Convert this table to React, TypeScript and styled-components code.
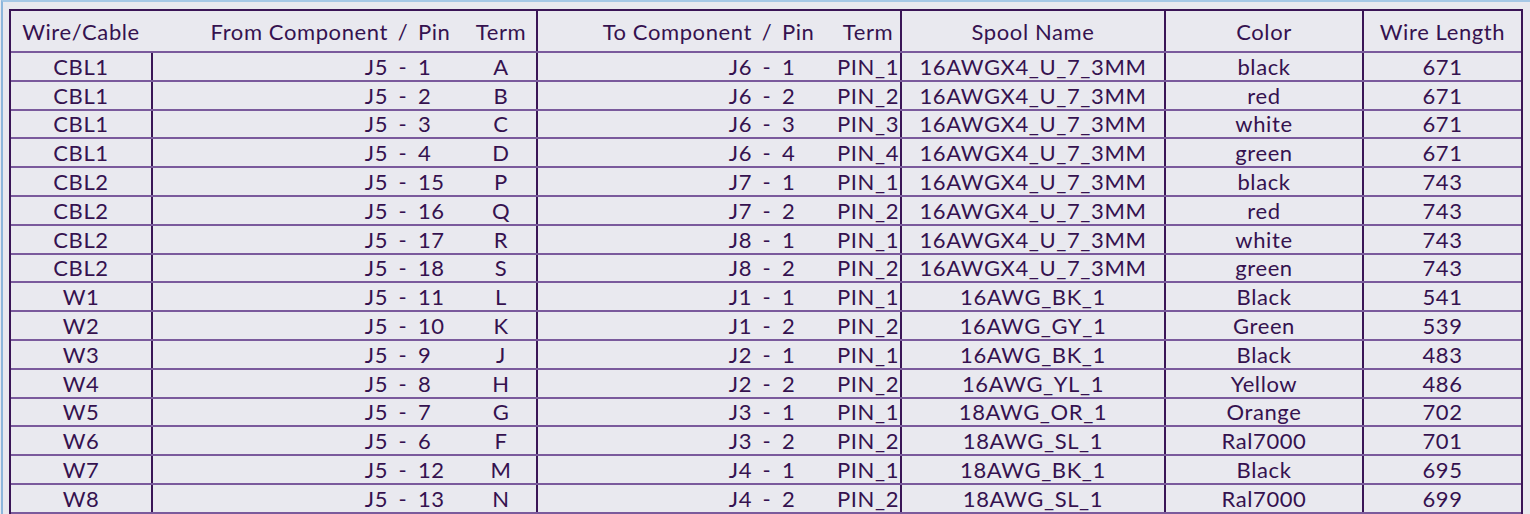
import React from 'react';
import styled, { createGlobalStyle } from 'styled-components';

const GlobalStyle = createGlobalStyle`
  html, body {
    margin: 0;
    padding: 0;
    background: #e9e9ef;
  }
`;

const COLUMNS = '140px 315px 70px 300px 64px 264px 198px 159px';

const Frame = styled.div`
  height: 514px;
  box-sizing: border-box;
  margin-left: 1px;
  padding: 7px 0 0 6px;
  border-top: 2px solid #a6c8e6;
  border-left: 2px solid #8db6dc;
  overflow: hidden;
`;

const Table = styled.div`
  width: 1514px;
  box-sizing: border-box;
  border: 2px solid #3a1556;
  border-bottom: none;
  font-family: Lato, 'Open Sans', sans-serif;
  font-size: 22px;
  letter-spacing: 0.6px;
  color: #35124f;
`;

const HeaderRow = styled.div`
  display: grid;
  grid-template-columns: ${COLUMNS};
  height: 42px;
  box-sizing: border-box;
  border-bottom: 2px solid #7a5a9c;
`;

const Row = styled.div`
  display: grid;
  grid-template-columns: ${COLUMNS};
  height: 28.8px;
  box-sizing: border-box;
  border-bottom: 2px solid #7a5a9c;
`;

const Cell = styled.div<{ $divider?: boolean }>`
  display: flex;
  align-items: center;
  justify-content: center;
  box-sizing: border-box;
  border-left: ${(p) => (p.$divider ? '2px solid #3a1556' : 'none')};
  white-space: nowrap;
  line-height: 1;
  padding-top: 1px;
`;

const PinRef = styled(Cell)<{ $gap: number }>`
  justify-content: flex-end;
  padding-right: ${(p) => p.$gap}px;
`;

const Dash = styled.span`
  width: 30px;
  text-align: center;
`;

const PinNo = styled.span`
  width: 32px;
  text-align: left;
`;

type Wire = {
  id: string;
  fromPin: string;
  fromTerm: string;
  to: string;
  toPin: string;
  toTerm: string;
  spool: string;
  color: string;
  length: number;
};

const wires: Wire[] = [
  { id: 'CBL1', fromPin: '1', fromTerm: 'A', to: 'J6', toPin: '1', toTerm: 'PIN_1', spool: '16AWGX4_U_7_3MM', color: 'black', length: 671 },
  { id: 'CBL1', fromPin: '2', fromTerm: 'B', to: 'J6', toPin: '2', toTerm: 'PIN_2', spool: '16AWGX4_U_7_3MM', color: 'red', length: 671 },
  { id: 'CBL1', fromPin: '3', fromTerm: 'C', to: 'J6', toPin: '3', toTerm: 'PIN_3', spool: '16AWGX4_U_7_3MM', color: 'white', length: 671 },
  { id: 'CBL1', fromPin: '4', fromTerm: 'D', to: 'J6', toPin: '4', toTerm: 'PIN_4', spool: '16AWGX4_U_7_3MM', color: 'green', length: 671 },
  { id: 'CBL2', fromPin: '15', fromTerm: 'P', to: 'J7', toPin: '1', toTerm: 'PIN_1', spool: '16AWGX4_U_7_3MM', color: 'black', length: 743 },
  { id: 'CBL2', fromPin: '16', fromTerm: 'Q', to: 'J7', toPin: '2', toTerm: 'PIN_2', spool: '16AWGX4_U_7_3MM', color: 'red', length: 743 },
  { id: 'CBL2', fromPin: '17', fromTerm: 'R', to: 'J8', toPin: '1', toTerm: 'PIN_1', spool: '16AWGX4_U_7_3MM', color: 'white', length: 743 },
  { id: 'CBL2', fromPin: '18', fromTerm: 'S', to: 'J8', toPin: '2', toTerm: 'PIN_2', spool: '16AWGX4_U_7_3MM', color: 'green', length: 743 },
  { id: 'W1', fromPin: '11', fromTerm: 'L', to: 'J1', toPin: '1', toTerm: 'PIN_1', spool: '16AWG_BK_1', color: 'Black', length: 541 },
  { id: 'W2', fromPin: '10', fromTerm: 'K', to: 'J1', toPin: '2', toTerm: 'PIN_2', spool: '16AWG_GY_1', color: 'Green', length: 539 },
  { id: 'W3', fromPin: '9', fromTerm: 'J', to: 'J2', toPin: '1', toTerm: 'PIN_1', spool: '16AWG_BK_1', color: 'Black', length: 483 },
  { id: 'W4', fromPin: '8', fromTerm: 'H', to: 'J2', toPin: '2', toTerm: 'PIN_2', spool: '16AWG_YL_1', color: 'Yellow', length: 486 },
  { id: 'W5', fromPin: '7', fromTerm: 'G', to: 'J3', toPin: '1', toTerm: 'PIN_1', spool: '18AWG_OR_1', color: 'Orange', length: 702 },
  { id: 'W6', fromPin: '6', fromTerm: 'F', to: 'J3', toPin: '2', toTerm: 'PIN_2', spool: '18AWG_SL_1', color: 'Ral7000', length: 701 },
  { id: 'W7', fromPin: '12', fromTerm: 'M', to: 'J4', toPin: '1', toTerm: 'PIN_1', spool: '18AWG_BK_1', color: 'Black', length: 695 },
  { id: 'W8', fromPin: '13', fromTerm: 'N', to: 'J4', toPin: '2', toTerm: 'PIN_2', spool: '18AWG_SL_1', color: 'Ral7000', length: 699 },
];

const App = () => {
  return (
    <>
      <GlobalStyle />
      <Frame>
        <Table>
          <HeaderRow>
            <Cell>Wire/Cable</Cell>
            <PinRef $gap={16}>
              <span>From Component</span>
              <Dash>/</Dash>
              <PinNo>Pin</PinNo>
            </PinRef>
            <Cell>Term</Cell>
            <PinRef $divider $gap={22}>
              <span>To Component</span>
              <Dash>/</Dash>
              <PinNo>Pin</PinNo>
            </PinRef>
            <Cell>Term</Cell>
            <Cell $divider>Spool Name</Cell>
            <Cell $divider>Color</Cell>
            <Cell $divider>Wire Length</Cell>
          </HeaderRow>
          {wires.map((w, i) => (
            <Row key={i}>
              <Cell>{w.id}</Cell>
              <PinRef $divider $gap={16}>
                <span>J5</span>
                <Dash>-</Dash>
                <PinNo>{w.fromPin}</PinNo>
              </PinRef>
              <Cell>{w.fromTerm}</Cell>
              <PinRef $divider $gap={22}>
                <span>{w.to}</span>
                <Dash>-</Dash>
                <PinNo>{w.toPin}</PinNo>
              </PinRef>
              <Cell>{w.toTerm}</Cell>
              <Cell $divider>{w.spool}</Cell>
              <Cell $divider>{w.color}</Cell>
              <Cell $divider>{w.length}</Cell>
            </Row>
          ))}
        </Table>
      </Frame>
    </>
  );
};

export default App;
